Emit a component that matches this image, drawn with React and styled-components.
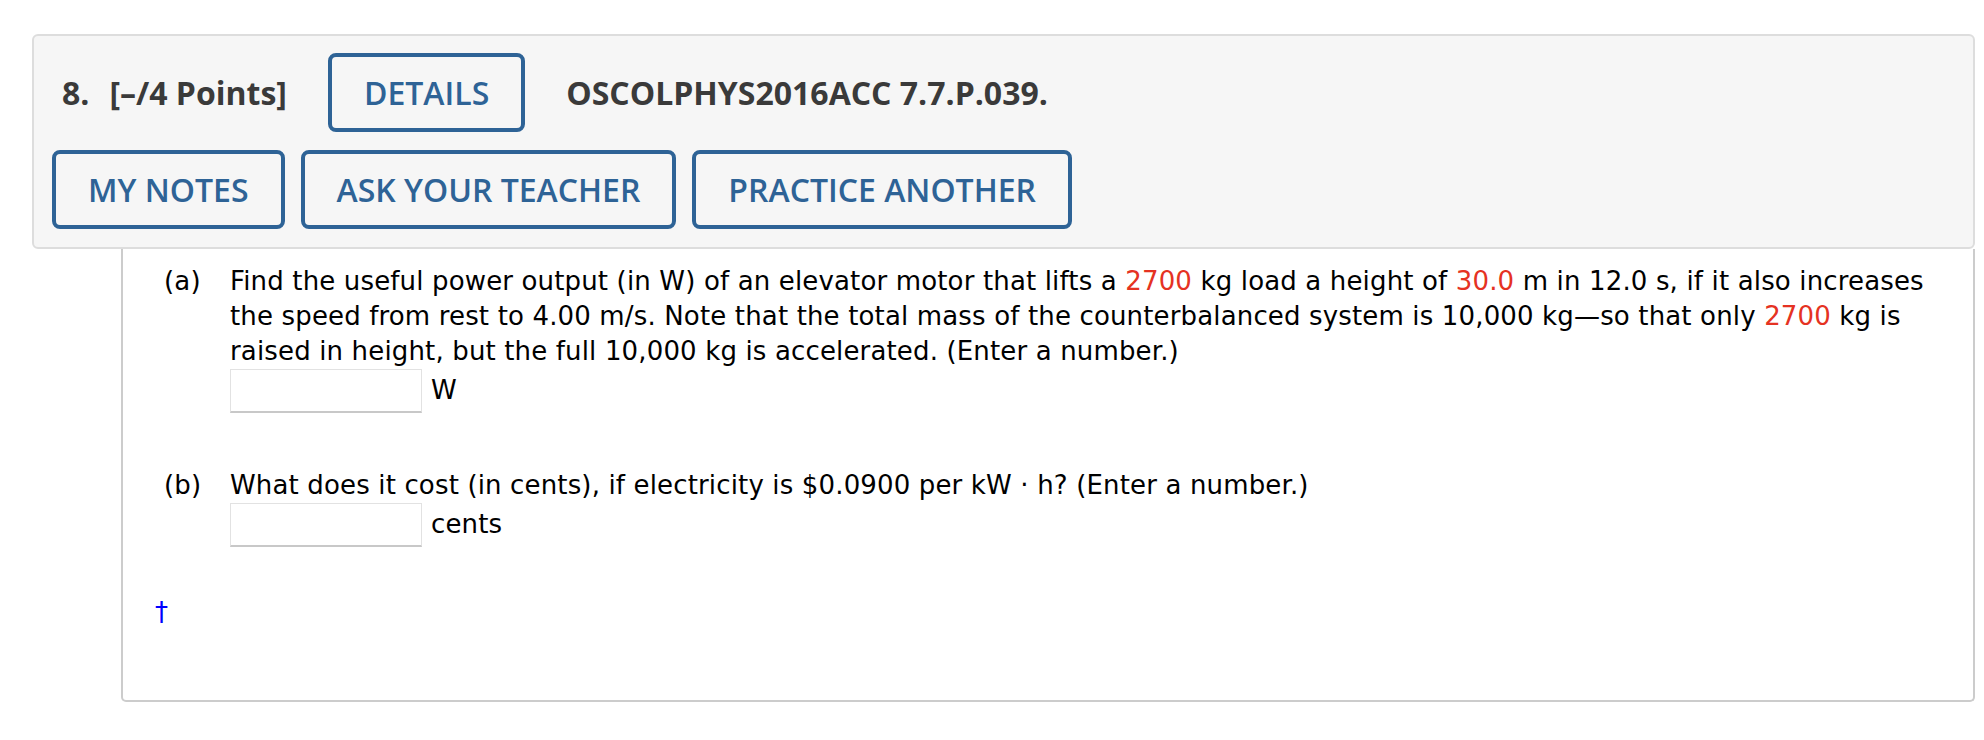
import styled, { createGlobalStyle } from "styled-components";

const GlobalStyle = createGlobalStyle`
  html, body {
    margin: 0;
    padding: 0;
    background: #fff;
  }
  body {
    font-family: "DejaVu Sans", Verdana, sans-serif;
  }
`;

const Page = styled.div`
  padding: 34px 9px 0 32px;
`;

const QuestionHeader = styled.div`
  background: #f6f6f6;
  border: 2px solid #dddddd;
  border-radius: 6px;
  padding: 17px 16px 18px 18px;
  display: flex;
  flex-direction: column;
  gap: 18px;
`;

const HeaderRow = styled.div`
  display: flex;
  align-items: center;
  gap: ${(p) => p.$gap ?? 16}px;
`;

const QuestionTitle = styled.span`
  font-family: "Open Sans", "Liberation Sans", sans-serif;
  font-weight: 700;
  font-size: 32px;
  color: #3a3a3a;
  margin-left: ${(p) => p.$indent || 0}px;
  white-space: nowrap;
`;

const Points = styled.span`
  margin-left: 20px;
`;

const OutlineButton = styled.button`
  box-sizing: border-box;
  height: 79px;
  padding: 0 32px;
  background: transparent;
  border: 4px solid #2e6396;
  border-radius: 8px;
  color: #2e6396;
  font-family: "Open Sans", "Liberation Sans", sans-serif;
  font-weight: 600;
  font-size: 32px;
  white-space: nowrap;
  margin: 0 ${(p) => p.$side || 0}px;
  cursor: pointer;
`;

const AnswerBox = styled.div`
  margin-left: 89px;
  border: 2px solid #cccccc;
  border-top: none;
  border-radius: 0 0 5px 5px;
  height: 453px;
  box-sizing: border-box;
  padding: 15px 16px 0 41px;
  color: #000;
`;

const Part = styled.div`
  display: grid;
  grid-template-columns: 66px 1fr;
  font-size: 26px;
  line-height: 35px;
  letter-spacing: 0.15px;
  margin-bottom: ${(p) => p.$space || 0}px;
`;

const PartLabel = styled.span``;

const PartText = styled.div``;

const Given = styled.span`
  color: #e53222;
`;

const AnswerLine = styled.div`
  display: flex;
  align-items: baseline;
  gap: 9px;
`;

const NumberInput = styled.input`
  box-sizing: border-box;
  width: 192px;
  height: 44px;
  border: 1px solid #e2e2e2;
  border-bottom: 2px solid #c8c8c8;
  background: #fff;
  font-size: 26px;
  padding: 0 6px;
`;

const Dagger = styled.div`
  color: #0000ff;
  font-size: 26px;
  line-height: 35px;
  margin-top: ${(p) => p.$top || 0}px;
  margin-left: -9px;
`;

export default function App() {
  return (
    <>
      <GlobalStyle />
      <Page>
        <QuestionHeader>
          <HeaderRow $gap={0}>
            <QuestionTitle $indent={10}>
              8.<Points>[–/4 Points]</Points>
            </QuestionTitle>
            <OutlineButton $side={41}>DETAILS</OutlineButton>
            <QuestionTitle>OSCOLPHYS2016ACC 7.7.P.039.</QuestionTitle>
          </HeaderRow>
          <HeaderRow>
            <OutlineButton>MY NOTES</OutlineButton>
            <OutlineButton>ASK YOUR TEACHER</OutlineButton>
            <OutlineButton>PRACTICE ANOTHER</OutlineButton>
          </HeaderRow>
        </QuestionHeader>

        <AnswerBox>
          <Part $space={55}>
            <PartLabel>(a)</PartLabel>
            <PartText>
              Find the useful power output (in W) of an elevator motor that lifts a{" "}
              <Given>2700</Given> kg load a height of <Given>30.0</Given> m in 12.0 s, if it
              also increases the speed from rest to 4.00 m/s. Note that the total mass of the
              counterbalanced system is 10,000 kg—so that only <Given>2700</Given> kg is raised
              in height, but the full 10,000 kg is accelerated. (Enter a number.)
              <AnswerLine>
                <NumberInput type="text" />
                W
              </AnswerLine>
            </PartText>
          </Part>
          <Part>
            <PartLabel>(b)</PartLabel>
            <PartText>
              What does it cost (in cents), if electricity is $0.0900 per kW · h? (Enter a number.)
              <AnswerLine>
                <NumberInput type="text" />
                cents
              </AnswerLine>
            </PartText>
          </Part>
          <Dagger $top={48}>†</Dagger>
        </AnswerBox>
      </Page>
    </>
  );
}
